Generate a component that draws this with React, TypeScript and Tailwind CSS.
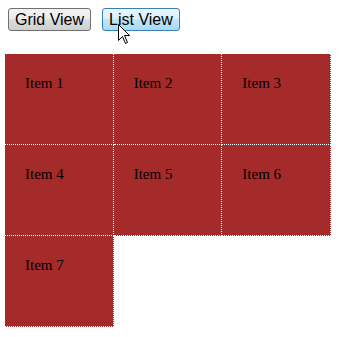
const ITEMS = ["Item 1", "Item 2", "Item 3", "Item 4", "Item 5", "Item 6", "Item 7"];

function Cursor() {
  return (
    <svg
      className="absolute left-[118px] top-[24px]"
      width="13"
      height="21"
      viewBox="0 0 13 21"
    >
      <path
        d="M0.5 0.5 L0.5 16.5 L4.5 12.5 L7.5 19.5 L9.5 18.5 L6.5 11.5 L11.5 11.5 Z"
        fill="#ffffff"
        stroke="#000000"
        strokeWidth="1"
        strokeLinejoin="miter"
      />
    </svg>
  );
}

export default function App() {
  return (
    <div className="relative min-h-[337px] w-[358px] bg-white">
      <div className="flex gap-[11px] pl-[8px] pt-[8px] font-['Liberation_Sans',Arial,sans-serif] text-[16px] text-black">
        <button className="h-[23px] rounded-[3px] border border-[#707070] bg-[linear-gradient(#f2f2f2_0%,#ebebeb_50%,#dddddd_50%,#cfcfcf_100%)] px-[6px] leading-[19px]">
          Grid View
        </button>
        <button className="h-[23px] rounded-[3px] border border-[#3c7fb1] bg-[linear-gradient(#eaf6fd_0%,#d9f0fc_50%,#bee6fd_50%,#a7d9f5_100%)] px-[6px] leading-[19px]">
          List View
        </button>
      </div>
      <div className="ml-[5px] mt-[23px] grid w-[326px] grid-cols-3 font-['Liberation_Serif','Times_New_Roman',serif] text-[15px] text-black">
        {ITEMS.map((label) => (
          <div
            key={label}
            className="h-[91px] border-b border-r border-dotted border-white bg-[#a52a2a] pl-[20px] pt-[18px]"
          >
            {label}
          </div>
        ))}
      </div>
      <Cursor />
    </div>
  );
}
